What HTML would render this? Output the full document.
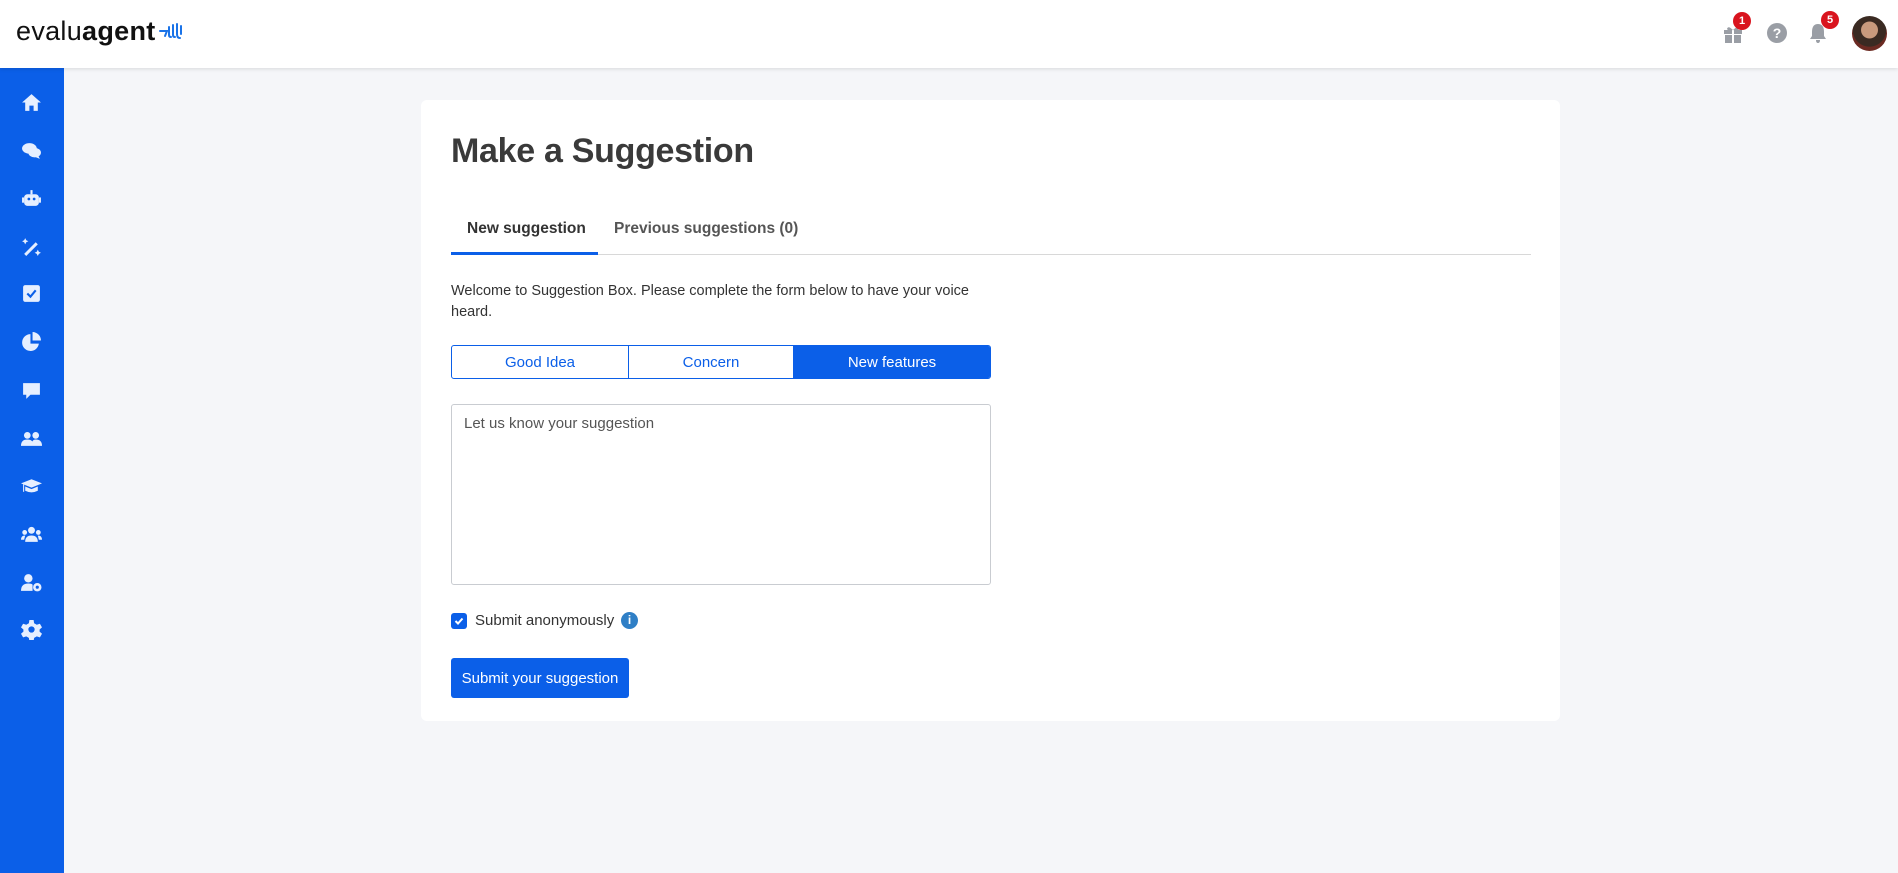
<!DOCTYPE html>
<html><head><meta charset="utf-8"><style>
*{box-sizing:border-box;margin:0;padding:0}
body{width:1898px;height:873px;background:#f5f6f9;font-family:"Liberation Sans",sans-serif;position:relative;overflow:hidden;color:#333}
.hdr{position:absolute;left:0;top:0;width:1898px;height:68px;background:#fff;box-shadow:0 1px 4px rgba(0,0,0,.12);z-index:2}
.logo{position:absolute;left:16px;top:16px;font-size:27px;color:#111;letter-spacing:.3px}
.logo b{font-weight:700}
.side{position:absolute;left:0;top:68px;width:64px;height:805px;background:#0b5fe8}
.side svg{position:absolute;left:21px;width:21px;height:21px;fill:#e6efff}
.card{position:absolute;left:421px;top:100px;width:1139px;height:621px;background:#fff;border-radius:6px}
h1{position:absolute;left:30px;top:32px;font-size:34px;font-weight:700;color:#3a3a3a;letter-spacing:-.3px}
.tabs{position:absolute;left:30px;top:110px;width:1080px;height:45px;border-bottom:1px solid #d8d8d8}
.tab{position:absolute;top:10px;font-size:15.5px;font-weight:700;color:#555}
.ul{position:absolute;left:0;top:42px;width:147px;height:3px;background:#0b5fe8}
.welcome{position:absolute;left:30px;top:181px;font-size:14.5px;line-height:21px;width:540px;color:#333}
.seg{position:absolute;left:30px;top:245px;width:540px;height:34px;border:1px solid #0b5fe8;border-radius:3px;display:flex;overflow:hidden}
.seg div{display:flex;align-items:center;justify-content:center;font-size:15px;color:#0b5fe8;border-right:1px solid #0b5fe8}
.ta{position:absolute;left:30px;top:304px;width:540px;height:181px;border:1px solid #c9ccd1;border-radius:3px;padding:10px 12px;font-size:15px;color:#555}
.cb{position:absolute;left:30px;top:513px;width:16px;height:16px;background:#0b5fe8;border-radius:3px}
.cbl{position:absolute;left:54px;top:512px;font-size:15px;color:#333}
.info{position:absolute;left:200px;top:512px;width:17px;height:17px;border-radius:50%;background:#2f7fc6;color:#fff;font-size:12px;font-weight:700;text-align:center;line-height:17px}
.btn{position:absolute;left:30px;top:558px;width:178px;height:40px;background:#0b5fe8;border-radius:3px;color:#fff;font-size:15px;display:flex;align-items:center;justify-content:center}
.ic{position:absolute;top:22px;width:22px;height:22px}
.badge{position:absolute;width:18px;height:18px;border-radius:50%;background:#d9141e;color:#fff;font-size:11px;font-weight:700;text-align:center;line-height:18px}
</style></head><body>
<div class="hdr">
 <div class="logo">evalu<b>agent</b><svg width="34" height="22" viewBox="0 0 34 22" style="vertical-align:-2px;margin-left:2px"><path d="M2 11 h7 l-2 5 M11 7 v8 q0 2 2 2 M15 5 v10 q0 2 2 2 M19 4 v10 q0 4 3 4 M23 6 v8" stroke="#1a73e8" stroke-width="2" fill="none" stroke-linecap="round"/></svg></div>
 <svg class="ic" style="left:1722px" viewBox="0 0 22 22"><rect x="2" y="8" width="18" height="4" fill="#9a9ea5"/><rect x="3" y="13" width="16" height="8" fill="#9a9ea5"/><rect x="10" y="8" width="2" height="13" fill="#fff"/><path d="M11 8 q-5-5-6-1 q1 2 6 1 q5-5 6-1 q-1 2-6 1" fill="#9a9ea5"/></svg>
 <div class="badge" style="left:1733px;top:12px">1</div>
 <svg class="ic" style="left:1766px" viewBox="0 0 22 22"><circle cx="11" cy="11" r="10" fill="#9a9ea5"/><text x="11" y="16" font-size="14" font-weight="700" fill="#fff" text-anchor="middle" font-family="Liberation Sans">?</text></svg>
 <svg class="ic" style="left:1807px" viewBox="0 0 22 22"><path d="M11 2 q6 0 6 8 v4 l2 3 h-16 l2-3 v-4 q0-8 6-8z M9 18 h4 q0 3-2 3 q-2 0-2-3" fill="#9a9ea5"/></svg>
 <div class="badge" style="left:1821px;top:11px">5</div>
 <div style="position:absolute;left:1852px;top:16px;width:35px;height:35px;border-radius:50%;background:radial-gradient(circle at 50% 40%,#c99a7d 0 30%,#3a2a22 32% 60%,#6b2a22 62%)"></div>
</div>
<div class="side">
 <svg style="top:24px" viewBox="0 0 20 20"><path d="M10 2 L1 10 h3 v8 h4 v-5 h4 v5 h4 v-8 h3z"/></svg>
 <svg style="top:72px" viewBox="0 0 20 20"><ellipse cx="8" cy="8" rx="7" ry="5"/><ellipse cx="13" cy="12" rx="6" ry="4.5"/><path d="M16 14 l2 4 -5-2z"/></svg>
 <svg style="top:120px" viewBox="0 0 20 20"><rect x="3" y="6" width="14" height="11" rx="3"/><rect x="9" y="2" width="2" height="4"/><rect x="1" y="9" width="2" height="5"/><rect x="17" y="9" width="2" height="5"/><circle cx="7.5" cy="10.5" r="1.3" fill="#0b5fe8"/><circle cx="12.5" cy="10.5" r="1.3" fill="#0b5fe8"/></svg>
 <svg style="top:168px" viewBox="0 0 20 20"><path d="M3 17 L14 6 l2 2 L5 19z"/><path d="M4 2 l1 2 2 1 -2 1 -1 2 -1-2 -2-1 2-1z M16 13 l1 2 2 1-2 1-1 2-1-2-2-1 2-1z"/></svg>
 <svg style="top:215px" viewBox="0 0 20 20"><rect x="2" y="2" width="16" height="16" rx="2"/><path d="M6 10 l3 3 5-6" stroke="#0b5fe8" stroke-width="2" fill="none"/></svg>
 <svg style="top:263px" viewBox="0 0 20 20"><path d="M9 3 a8 8 0 1 0 8 9 h-8z"/><path d="M11 1 a8 8 0 0 1 8 8 h-8z"/></svg>
 <svg style="top:312px" viewBox="0 0 20 20"><path d="M2 3 h16 v11 h-9 l-4 4 v-4 h-3z"/></svg>
 <svg style="top:360px" viewBox="0 0 20 20"><circle cx="6" cy="7" r="3.2"/><circle cx="14" cy="7" r="3.2"/><path d="M0 17 q0-6 6-6 q6 0 6 6z M10 17 q0-6 4-6 q6 0 6 6z"/></svg>
 <svg style="top:407px" viewBox="0 0 20 20"><path d="M10 4 L0 8 10 12 20 8z M4 11 v4 q6 3 12 0 v-4 l-6 2.5z"/><rect x="2" y="9" width="1" height="7"/></svg>
 <svg style="top:456px" viewBox="0 0 20 20"><circle cx="10" cy="6" r="3.3"/><circle cx="3.5" cy="8" r="2.3"/><circle cx="16.5" cy="8" r="2.3"/><path d="M4 17 q0-6 6-6 q6 0 6 6z M0 15 q0-4 4-4 l-1 4z M20 15 q0-4-4-4 l1 4z"/></svg>
 <svg style="top:504px" viewBox="0 0 20 20"><circle cx="7" cy="6" r="4"/><path d="M0 18 q0-7 7-7 q3 0 4 1 v6z"/><circle cx="15.5" cy="14.5" r="4"/><circle cx="15.5" cy="14.5" r="1.5" fill="#0b5fe8"/></svg>
 <svg style="top:551px" viewBox="0 0 20 20"><path d="M8 1 h4 l.5 3 2.5 1.5 3-1 2 3.5-2.3 2 v2 l2.3 2-2 3.5-3-1-2.5 1.5-.5 3h-4l-.5-3-2.5-1.5-3 1-2-3.5 2.3-2v-2l-2.3-2 2-3.5 3 1 2.5-1.5z"/><circle cx="10" cy="10" r="3" fill="#0b5fe8"/></svg>
</div>
<div class="card">
 <h1>Make a Suggestion</h1>
 <div class="tabs">
  <div class="tab" style="left:16px;color:#333">New suggestion</div>
  <div class="tab" style="left:163px">Previous suggestions (0)</div>
  <div class="ul"></div>
 </div>
 <div class="welcome">Welcome to Suggestion Box. Please complete the form below to have your voice heard.</div>
 <div class="seg"><div style="width:177px">Good Idea</div><div style="width:165px">Concern</div><div style="flex:1;background:#0b5fe8;color:#fff;border:0">New features</div></div>
 <div class="ta">Let us know your suggestion</div>
 <div class="cb"><svg width="16" height="16" viewBox="0 0 16 16"><path d="M4.5 8 l2.5 2.5 4.5-5" stroke="#fff" stroke-width="2" fill="none"/></svg></div>
 <div class="cbl">Submit anonymously</div>
 <div class="info">i</div>
 <div class="btn">Submit your suggestion</div>
</div>
</body></html>
